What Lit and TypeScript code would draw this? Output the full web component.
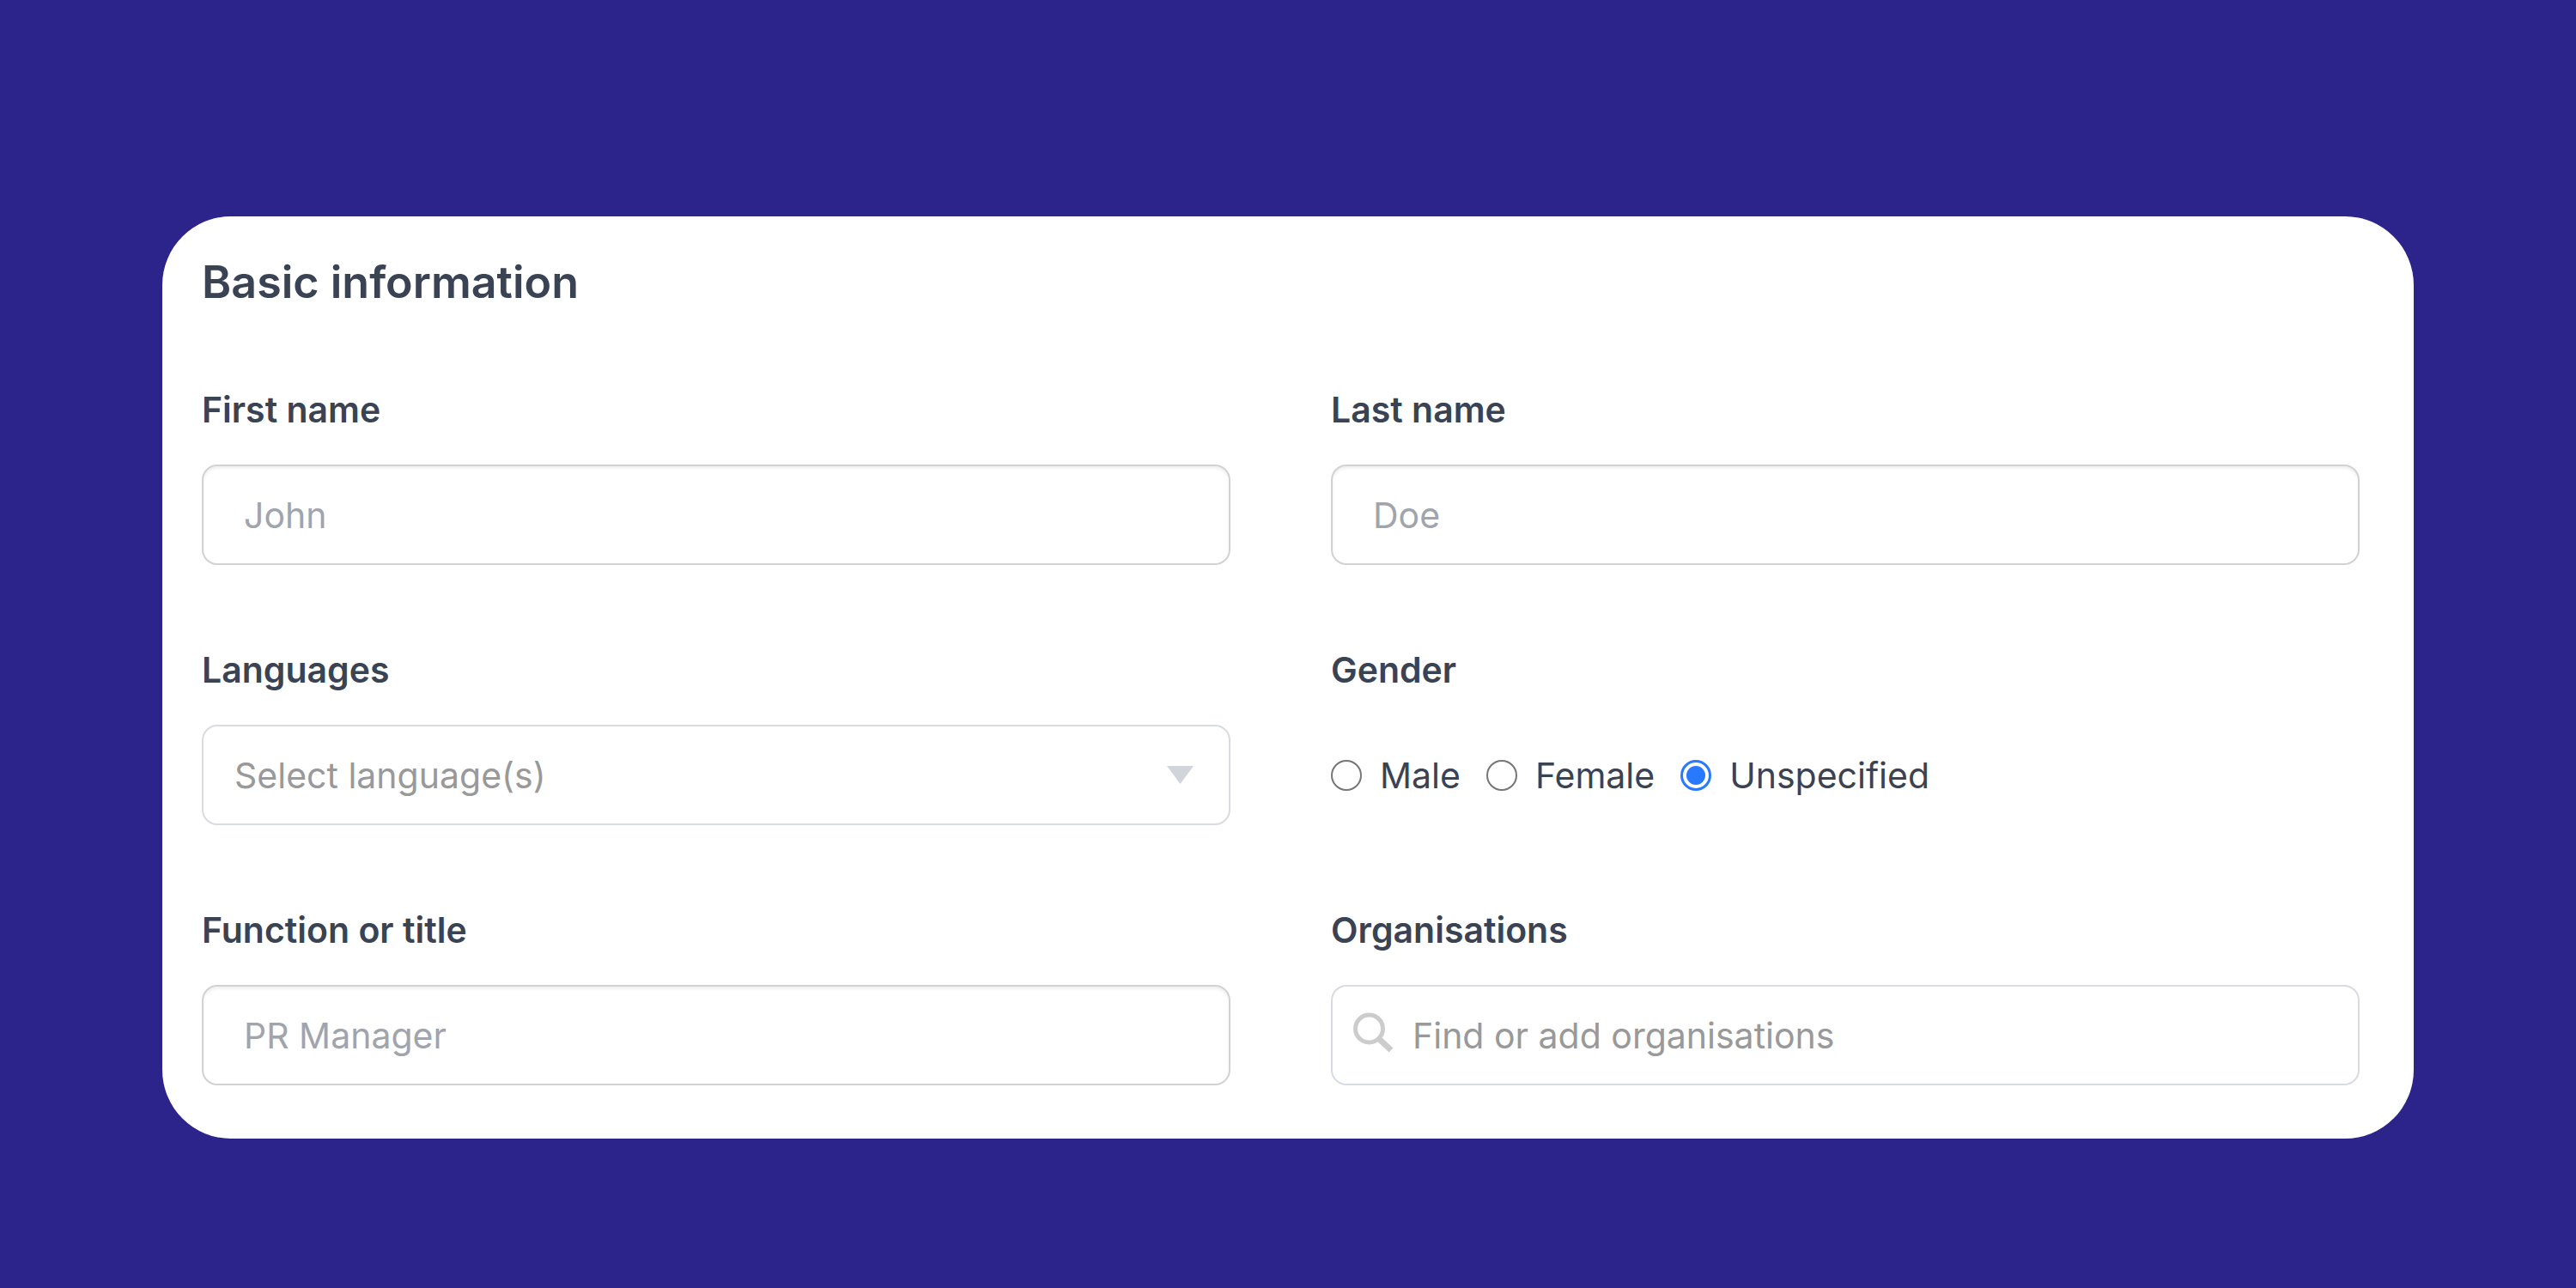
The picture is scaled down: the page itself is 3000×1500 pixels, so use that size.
import { LitElement, html, css } from "lit";
import { customElement, state } from "lit/decorators.js";

const GENDERS = ["Male", "Female", "Unspecified"];
const LANGUAGES = ["Dutch", "English", "French", "German"];

@customElement("app-root")
export class AppRoot extends LitElement {
  @state() private gender = "Unspecified";

  static styles = css`
    :host {
      display: block;
      box-sizing: border-box;
      min-height: 100vh;
      padding: 252px 189px 174px;
      background: #2c238b;
      color: #3a4354;
      font-family: Inter, "Liberation Sans", sans-serif;
      font-size: 41px;
      line-height: 48px;
    }
    *,
    *::before,
    *::after {
      box-sizing: border-box;
    }
    .card {
      display: block;
      padding: 45px 63px 62px 46px;
      border-radius: 80px;
      background: #fff;
    }
    .title {
      margin: 0 0 92px;
      font-size: 52px;
      line-height: 64px;
      font-weight: 600;
    }
    .fields {
      display: grid;
      grid-template-columns: 1fr 1fr;
      gap: 98px 117px;
    }
    .field {
      display: flex;
      flex-direction: column;
      gap: 40px;
      min-width: 0;
      margin: 0;
      padding: 0;
      border: 0;
    }
    .label {
      font-weight: 600;
    }
    .wrap {
      position: relative;
      display: grid;
    }
    .control {
      width: 100%;
      height: 117px;
      margin: 0;
      padding: 0 47px;
      border: 2px solid #d2d2d2;
      border-radius: 18px;
      background: #fff;
      color: #3a4354;
      font: inherit;
      outline-color: #2979ff;
    }
    .text {
      box-shadow: inset 0 3px 3px #0000000f;
    }
    .control::placeholder {
      color: #a0a4ad;
      opacity: 1;
    }
    .select {
      appearance: none;
      padding: 0 96px 0 36px;
      border-color: #d8dbe1;
      color: #999;
    }
    .search {
      padding-left: 93px;
      border-color: #d8dbe1;
    }
    .search::placeholder {
      color: #999;
    }
    .arrow,
    .glass {
      position: absolute;
      pointer-events: none;
    }
    .arrow {
      top: 48px;
      right: 43px;
      width: 31px;
      height: 21px;
    }
    .glass {
      top: 32px;
      left: 26px;
      width: 48px;
      height: 48px;
    }
    .options {
      display: flex;
      align-items: center;
      gap: 30px;
      height: 117px;
    }
    .option {
      display: flex;
      align-items: center;
      gap: 21px;
    }
    .radio {
      appearance: none;
      width: 36px;
      height: 36px;
      margin: 0;
      padding: 5px;
      border: 2px solid #767676;
      border-radius: 50%;
      background: #fff;
    }
    .radio:checked {
      padding: 4px;
      border: 3px solid #2979ff;
      background: #2979ff content-box;
    }
  `;

  private textField(id: string, label: string, placeholder: string) {
    return html`
      <div class="field">
        <label class="label" for=${id}>${label}</label>
        <input class="control text" id=${id} type="text" placeholder=${placeholder} />
      </div>
    `;
  }

  render() {
    return html`
      <form class="card">
        <h1 class="title">Basic information</h1>
        <div class="fields">
          ${this.textField("first-name", "First name", "John")}
          ${this.textField("last-name", "Last name", "Doe")}

          <div class="field">
            <label class="label" for="languages">Languages</label>
            <div class="wrap">
              <select class="control select" id="languages">
                <option value="" selected>Select language(s)</option>
                ${LANGUAGES.map((name) => html`<option>${name}</option>`)}
              </select>
              <svg class="arrow" viewBox="0 0 31 21" aria-hidden="true">
                <path d="M0 0H31L15.5 21Z" fill="#d1d5db" />
              </svg>
            </div>
          </div>

          <div class="field" role="radiogroup" aria-labelledby="gender-label">
            <span class="label" id="gender-label">Gender</span>
            <div class="options">
              ${GENDERS.map(
                (name) => html`
                  <label class="option">
                    <input
                      class="radio"
                      type="radio"
                      name="gender"
                      .value=${name}
                      .checked=${this.gender === name}
                      @change=${() => (this.gender = name)}
                    />
                    <span>${name}</span>
                  </label>
                `
              )}
            </div>
          </div>

          ${this.textField("function", "Function or title", "PR Manager")}

          <div class="field">
            <label class="label" for="organisations">Organisations</label>
            <div class="wrap">
              <input
                class="control search"
                id="organisations"
                type="text"
                placeholder="Find or add organisations"
              />
              <svg class="glass" viewBox="0 0 48 48" fill="none" stroke="#ccc" aria-hidden="true">
                <circle cx="18.5" cy="19" r="16" stroke-width="5" />
                <path d="M29 30L44 44" stroke-width="7" />
              </svg>
            </div>
          </div>
        </div>
      </form>
    `;
  }
}
